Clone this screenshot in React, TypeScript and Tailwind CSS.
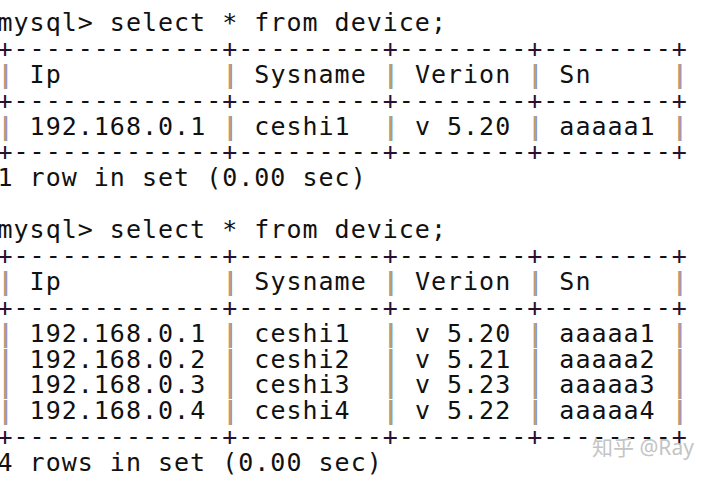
import React from "react";

const sep = "+" + "-".repeat(13) + "+" + "-".repeat(9) + "+" + "-".repeat(8) + "+" + "-".repeat(8) + "+";
const row = (a: string, b: string, c: string, d: string) =>
  "| " + a.padEnd(11) + " | " + b.padEnd(7) + " | " + c.padEnd(6) + " | " + d.padEnd(6) + " |";

const lines: string[] = [
  "mysql> select * from device;",
  sep,
  row("Ip", "Sysname", "Verion", "Sn"),
  sep,
  row("192.168.0.1", "ceshi1", "v 5.20", "aaaaa1"),
  sep,
  "1 row in set (0.00 sec)",
  "",
  "mysql> select * from device;",
  sep,
  row("Ip", "Sysname", "Verion", "Sn"),
  sep,
  row("192.168.0.1", "ceshi1", "v 5.20", "aaaaa1"),
  row("192.168.0.2", "ceshi2", "v 5.21", "aaaaa2"),
  row("192.168.0.3", "ceshi3", "v 5.23", "aaaaa3"),
  row("192.168.0.4", "ceshi4", "v 5.22", "aaaaa4"),
  sep,
  "4 rows in set (0.00 sec)",
];

function Line({ text }: { text: string }) {
  const parts: React.ReactNode[] = [];
  let buf = "";
  let k = 0;
  for (const ch of text) {
    if (ch === "|" || ch === "+") {
      if (buf) parts.push(<span key={k++}>{buf}</span>);
      buf = "";
      if (ch === "|") {
        parts.push(
          <span key={k++} className="text-[#c09a68] [text-shadow:1px_0_0_#7090c0]">
            |
          </span>
        );
      } else {
        parts.push(
          <span key={k++} className="text-[#2a1030]">
            +
          </span>
        );
      }
    } else {
      buf += ch;
    }
  }
  if (buf) parts.push(<span key={k++}>{buf}</span>);
  return <div className="h-[25.9px] whitespace-pre">{parts.length ? parts : " "}</div>;
}

export default function App() {
  return (
    <div className="relative w-[719px] h-[481px] bg-white overflow-hidden">
      <div className="pt-[10px] ml-[-2.5px] font-['DejaVu_Sans_Mono',monospace] text-[25px] leading-[25.9px] tracking-[1px] text-[#111]">
        {lines.map((l, i) => (
          <Line key={i} text={l} />
        ))}
      </div>
      <div className="absolute left-[592px] top-[434px] font-['Noto_Sans','Noto_Sans_CJK_SC',sans-serif] text-[21px] leading-[26px] text-[#c4c4c4] whitespace-nowrap">
        知乎 @Ray
      </div>
    </div>
  );
}
